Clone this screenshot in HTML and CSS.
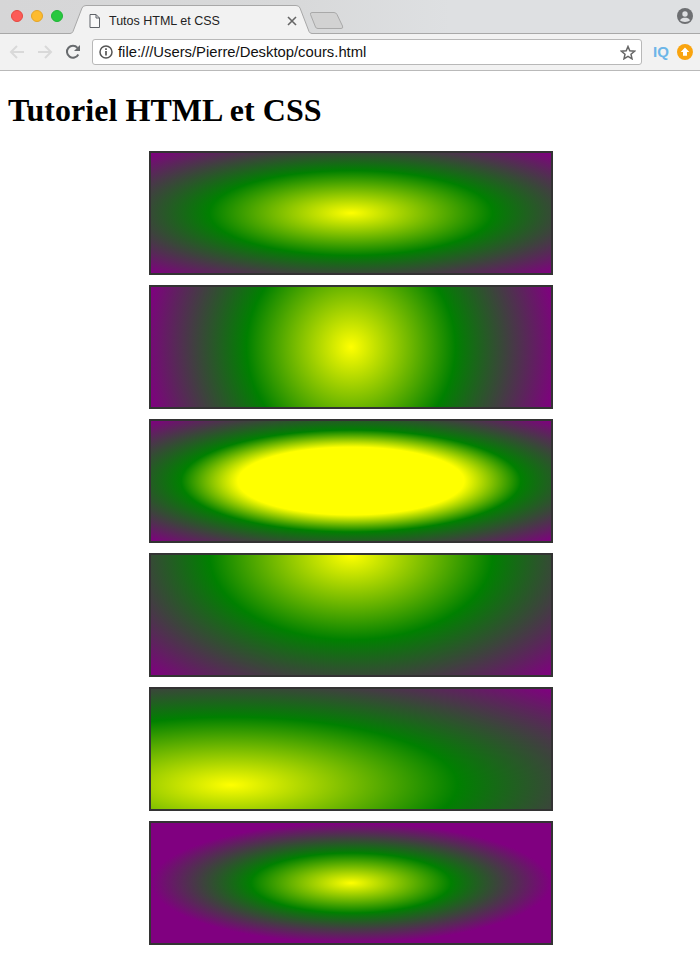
FILE: index.html
```html
<!DOCTYPE html>
<html lang="fr">
<head>
<meta charset="utf-8">
<title>Tutos HTML et CSS</title>
<link rel="stylesheet" href="styles.css">
</head>
<body>
<header class="chrome">
  <div class="strip">
    <div class="lights">
      <span class="light red"></span>
      <span class="light amber"></span>
      <span class="light green"></span>
    </div>
    <div class="tab">
      <svg class="tab-shape" width="244" height="30" viewBox="0 0 244 30"><path d="M0 28.5H1Q3 28.5 4 26.5L13 3Q14 .5 17 .5H227Q230 .5 231 3L240 26.5Q241 28.5 243 28.5H244V30H0Z" fill="#f2f2f2"/><path d="M0 28.5H1Q3 28.5 4 26.5L13 3Q14 .5 17 .5H227Q230 .5 231 3L240 26.5Q241 28.5 243 28.5H244" fill="none" stroke="#a8a8a8"/></svg>
      <svg class="file-icon" width="11" height="14" viewBox="0 0 11 14"><path d="M1 .5H7L10.5 4V13.5H1Z M7 .5V4H10.5" fill="#fafafa" stroke="#5f6368"/></svg>
      <span class="tab-title">Tutos HTML et CSS</span>
      <svg class="close-icon" width="10" height="10" viewBox="0 0 10 10"><path d="M1 1L9 9M9 1L1 9" stroke="#666" stroke-width="1.6"/></svg>
    </div>
    <svg class="new-tab" width="35" height="18" viewBox="0 0 35 18"><path d="M1.5 2.5Q1 .5 3 .5H25Q27 .5 28 2.5L33.5 14Q34.500 16.500 32 16.500H9Q7 16.500 6.500 15Z" fill="#d2d2d2" stroke="#a9a9a9"/></svg>
    <svg class="profile" width="16" height="16" viewBox="0 0 16 16"><circle cx="8" cy="8" r="8" fill="#6d6f72"/><circle cx="8" cy="6" r="2.7" fill="#dee0e2"/><path d="M3 12.300C4 10 6 9.800 8 9.800S12 10 13 12.300C12 13.500 10 14 8 14S4 13.500 3 12.300Z" fill="#dee0e2"/></svg>
  </div>
  <div class="toolbar">
    <svg class="nav-icon" width="16" height="14" viewBox="0 0 16 14"><path d="M15 7H2M8 1L2 7L8 13" fill="none" stroke="#d9d9d9" stroke-width="2"/></svg>
    <svg class="nav-icon" width="16" height="14" viewBox="0 0 16 14"><path d="M1 7H14M8 1L14 7L8 13" fill="none" stroke="#d9d9d9" stroke-width="2"/></svg>
    <svg class="nav-icon" width="16" height="16" viewBox="0 0 16 16"><path d="M13.300 10.500A6 6 0 1 1 12.500 3.800" fill="none" stroke="#686b6e" stroke-width="2"/><path d="M15 1V7H9Z" fill="#686b6e"/></svg>
    <div class="address">
      <svg width="14" height="14" viewBox="0 0 14 14"><circle cx="7" cy="7" r="6" fill="none" stroke="#555" stroke-width="1.500"/><path d="M7 6V10.500M7 3.200V5" stroke="#555" stroke-width="1.700"/></svg>
      <span class="url">file:///Users/Pierre/Desktop/cours.html</span>
      <svg class="star" width="16" height="15" viewBox="0 0 16 15"><path d="M8 1.500L9.800 5.800L14.500 6.200L11 9.200L12 13.800L8 11.400L4 13.800L5 9.200L1.500 6.200L6.200 5.800Z" fill="none" stroke="#666" stroke-width="1.500"/></svg>
    </div>
    <span class="iq">IQ</span>
    <svg width="16" height="16" viewBox="0 0 16 16"><circle cx="8" cy="8" r="8" fill="#f9a40f"/><path d="M8 3.500L12.300 8H10V11.800H6V8H3.700Z" fill="#fff"/></svg>
  </div>
</header>
<main class="page">
  <h1>Tutoriel HTML et CSS</h1>
  <div class="box g1"></div>
  <div class="box g2"></div>
  <div class="box g3"></div>
  <div class="box g4"></div>
  <div class="box g5"></div>
  <div class="box g6"></div>
</main>
</body>
</html>
```
FILE: styles.css
```css
* { box-sizing: border-box; }
html, body { margin: 0; padding: 0; background: #fff; }
body { font-family: "Liberation Serif", serif; color: #000; overflow: hidden; }

.chrome { font-family: "Liberation Sans", Arial, sans-serif; }

.strip {
  display: flex;
  align-items: flex-start;
  height: 34px;
  border-bottom: 1px solid #a8a8a8;
  background: linear-gradient(90deg, #d6d6d7 0, #d8d9da 300px, #dee0e2 450px);
}
.lights { display: flex; gap: 8px; margin: 10px 0 0 11px; }
.light { width: 12px; height: 12px; border-radius: 50%; border: 1px solid; }
.red { background: #fc5b57; border-color: #e5483f; }
.amber { background: #fdbb2e; border-color: #e3a428; }
.green { background: #28c83f; border-color: #20b536; }

.tab {
  position: relative;
  width: 244px;
  height: 30px;
  margin: 5px 0 0 6px;
  padding: 9px 0 0 20px;
  display: flex;
  align-items: flex-start;
  flex: none;
}
.tab-shape { position: absolute; left: 0; top: 0; }
.file-icon { position: relative; margin-top: 0; }
.tab-title { position: relative; margin-left: 9px; font-size: 12.5px; line-height: 14px; color: #222; width: 175px; white-space: nowrap; }
.close-icon { position: relative; margin: 2px 0 0 3px; }

.new-tab { margin: 12px 0 0 -4px; flex: none; }
.profile { margin: 8px 7px 0 auto; flex: none; }

.toolbar {
  display: flex;
  align-items: center;
  height: 37px;
  padding: 0 7px 1px 9px;
  background: #f2f2f2;
  border-bottom: 1px solid #b9b9b9;
}
.nav-icon { margin-right: 12px; flex: none; }
.nav-icon:nth-child(3) { margin-right: 11px; }
.address {
  display: flex;
  align-items: center;
  width: 551px;
  height: 26px;
  margin: 1px 0 0 0;
  padding: 0 5px 0 6px;
  background: #fff;
  border: 1px solid #b8b8b8;
  border-radius: 3px;
}
.url { flex: 1; margin-left: 5px; font-size: 14.8px; color: #111; white-space: nowrap; }
.iq { margin: 0 8px 0 11px; font-size: 15px; font-weight: bold; color: #6cb6e8; width: 16px; }

.page { padding: 0 8px; }
h1 { margin: 21.44px 0; font-size: 32px; font-weight: bold; letter-spacing: 0.05px; }
.box {
  width: 404px;
  height: 124px;
  margin: 0 auto 10px;
  position: relative;
  left: 1px;
  border: 2px solid #333;
}
.g1 { background: radial-gradient(yellow, green, purple); }
.g2 { background: radial-gradient(circle, yellow, green, purple); }
.g3 { background: radial-gradient(yellow 40%, green 60%, purple); }
.g4 { background: radial-gradient(at top, yellow, green, purple); }
.g5 { background: radial-gradient(at 20% 80%, yellow, green, purple); }
.g6 { background: radial-gradient(closest-side, yellow, green, purple); }
```
